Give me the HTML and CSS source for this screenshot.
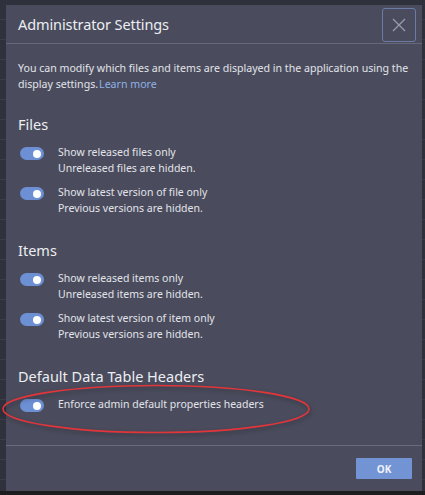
FILE: index.html
```html
<!DOCTYPE html>
<html>
<head>
<meta charset="utf-8">
<link rel="stylesheet" href="styles.css">
</head>
<body>
<div class="backdrop">
  <div class="dialog">
    <div class="header">
      <div class="title">Administrator Settings</div>
      <button class="close" aria-label="Close">
        <svg width="14" height="14" viewBox="0 0 14 14"><path d="M1 1L13 13M13 1L1 13" stroke="#9a9cab" stroke-width="1.3" fill="none"/></svg>
      </button>
    </div>
    <div class="body">
      <div class="intro">
        <div>You can modify which files and items are displayed in the application using the</div>
        <div><span>display settings.</span><a class="link">Learn more</a></div>
      </div>

      <h2 class="section first">Files</h2>
      <div class="row">
        <span class="toggle"><span class="knob"></span></span>
        <div class="labels"><div>Show released files only</div><div>Unreleased files are hidden.</div></div>
      </div>
      <div class="row">
        <span class="toggle"><span class="knob"></span></span>
        <div class="labels"><div>Show latest version of file only</div><div>Previous versions are hidden.</div></div>
      </div>

      <h2 class="section">Items</h2>
      <div class="row">
        <span class="toggle"><span class="knob"></span></span>
        <div class="labels"><div>Show released items only</div><div>Unreleased items are hidden.</div></div>
      </div>
      <div class="row">
        <span class="toggle"><span class="knob"></span></span>
        <div class="labels"><div>Show latest version of item only</div><div>Previous versions are hidden.</div></div>
      </div>

      <h2 class="section">Default Data Table Headers</h2>
      <div class="row single">
        <span class="toggle"><span class="knob"></span></span>
        <div class="labels"><div>Enforce admin default properties headers</div></div>
      </div>
    </div>
    <div class="footer">
      <button class="ok">OK</button>
    </div>
  </div>
  <svg class="ellipse" width="312" height="52" viewBox="0 0 312 52">
    <ellipse cx="156" cy="26" rx="153" ry="23.5" fill="none" stroke="#e2353a" stroke-width="1.6"/>
  </svg>
</div>
</body>
</html>
```
FILE: styles.css
```css
html, body {
  margin: 0;
  padding: 0;
  background: #1d1d1f;
}
.backdrop {
  position: relative;
  width: 425px;
  height: 495px;
  background:
    repeating-linear-gradient(to bottom, #2f313d 0px, #2f313d 19px, #3a3c49 19px, #3a3c49 20px);
  font-family: "Noto Sans", "Open Sans", sans-serif;
  color: #e6e7ec;
  overflow: hidden;
}
.backdrop::after {
  content: "";
  position: absolute;
  left: 0;
  right: 0;
  top: 491px;
  bottom: 0;
  background: #1d1d1f;
}
.dialog {
  position: absolute;
  left: 6px;
  top: 5px;
  width: 416px;
  height: 486px;
  background: #4a4c5d;
  display: flex;
  flex-direction: column;
}
.header {
  height: 38px;
  display: flex;
  align-items: center;
  justify-content: space-between;
  padding: 0 6px 0 12px;
  border-bottom: 1px solid #666879;
}
.title {
  font-size: 14.5px;
  letter-spacing: -0.1px;
  color: #eceef2;
}
.close {
  width: 34px;
  height: 34px;
  margin-top: 2px;
  border: 1.5px solid #6a7ca6;
  border-radius: 3px;
  background: transparent;
  display: flex;
  align-items: center;
  justify-content: center;
  padding: 0;
}
.body {
  flex: 1;
  padding: 0 12px;
}
.intro {
  margin: 16px 0 0;
  font-size: 10.6px;
  line-height: 16px;
  color: #e3e4ea;
  white-space: nowrap;
}
.link {
  color: #8fb1e6;
  margin-left: 1px;
}
.section {
  margin: 24px 0 0;
  font-size: 14.5px;
  font-weight: normal;
  color: #eceef2;
  line-height: 20px;
}
.section.first {
  margin-top: 22px;
}
.section + .row {
  margin-top: 12px;
}
.row {
  display: flex;
  gap: 14px;
  margin-top: 10px;
  padding-left: 2px;
}
.toggle {
  width: 24px;
  height: 13px;
  border-radius: 7px;
  background: #6d8fd4;
  position: relative;
  flex: none;
  margin-top: 1px;
}
.knob {
  position: absolute;
  right: 3px;
  top: 2.5px;
  width: 8px;
  height: 8px;
  border-radius: 50%;
  background: #ffffff;
}
.labels {
  font-size: 10.5px;
  line-height: 16px;
  color: #e3e4ea;
  margin-top: -2px;
}
.footer {
  height: 45px;
  border-top: 1px solid #6a6c7d;
  display: flex;
  justify-content: flex-end;
  align-items: center;
  padding-right: 10px;
}
.ok {
  width: 56px;
  height: 21px;
  background: #7394d4;
  border: none;
  border-radius: 1px;
  color: #eef2fa;
  font-family: "Noto Sans", sans-serif;
  font-weight: bold;
  font-size: 10px;
  padding: 0;
}
.ellipse {
  position: absolute;
  left: 0;
  top: 383px;
  filter: drop-shadow(1px 2px 2px rgba(0,0,0,0.35));
}
```
